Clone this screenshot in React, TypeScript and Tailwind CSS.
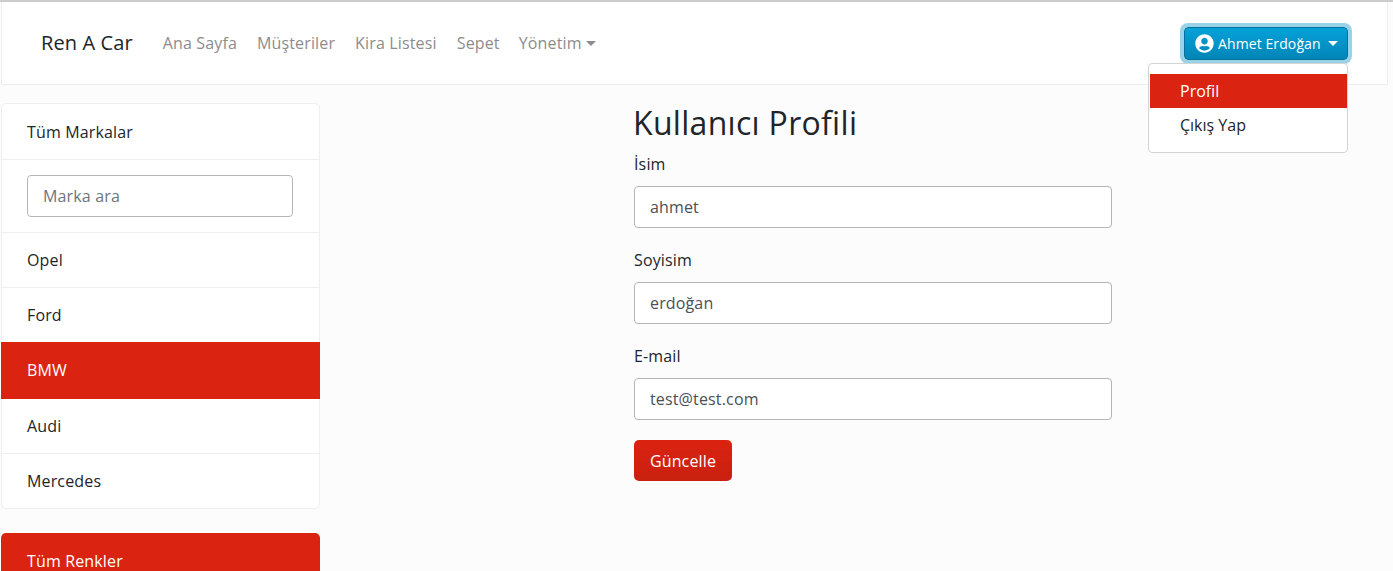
const brands = ["Opel", "Ford", "BMW", "Audi", "Mercedes"];

function UserIcon() {
  return (
    <svg viewBox="0 0 496 512" className="w-[19px] h-[19px] mr-[4px] shrink-0" fill="currentColor">
      <path d="M248 8C111 8 0 119 0 256s111 248 248 248 248-111 248-248S385 8 248 8zm0 96c48.600 0 88 39.400 88 88s-39.400 88-88 88-88-39.400-88-88 39.400-88 88-88zm0 344c-58.700 0-111.300-26.600-146.500-68.200 18.800-35.400 55.600-59.800 98.500-59.800 2.400 0 4.800.4 7.100 1.100 13 4.200 26.600 6.900 40.900 6.900 14.300 0 28-2.700 40.900-6.900 2.300-.7 4.700-1.100 7.100-1.100 42.900 0 79.700 24.400 98.500 59.800C359.300 421.400 306.700 448 248 448z" />
    </svg>
  );
}

function Caret() {
  return <span className="ml-[7px] inline-block border-x-[5px] border-t-[5px] border-x-transparent border-t-current" />;
}

function Navbar() {
  const links = ["Ana Sayfa", "Müşteriler", "Kira Listesi", "Sepet"];
  return (
    <nav className="relative ml-px mr-[5px] h-[83px] border border-t-0 border-[#eeeeee] bg-white flex items-center pl-[39px] pr-[39px]">
      <a className="text-[20px] text-[#212529] mr-[30px] tracking-[0.1px]">Ren A Car</a>
      <div className="flex items-center gap-[20px] text-[#8c8c8c]">
        {links.map((l) => (
          <a key={l}>{l}</a>
        ))}
        <a className="flex items-center -ml-px">
          Yönetim
          <span className="ml-[4px] inline-block border-x-[5px] border-t-[5px] border-x-transparent border-t-current" />
        </a>
      </div>
      <div className="relative ml-auto">
        <button className="flex items-center h-[33px] w-[164px] pl-[10px] rounded-[4px] border border-[#04729c] bg-gradient-to-b from-[#04a2d9] to-[#0285b7] text-[14px] tracking-[0.1px] text-white ring-4 ring-[#98d3e8]">
          <UserIcon />
          Ahmet Erdoğan
          <Caret />
        </button>
        <div className="absolute right-0 top-[36px] w-[200px] h-[90px] rounded-[4px] border border-[#d4d4d4] bg-white py-[10px] pl-px z-10 tracking-normal">
          <a className="block h-[34px] leading-[34px] pl-[30px] bg-[#da2310] text-white">Profil</a>
          <a className="block h-[34px] leading-[34px] pl-[30px] text-[#212529]">Çıkış Yap</a>
        </div>
      </div>
    </nav>
  );
}

function BrandList() {
  return (
    <div className="rounded-[5px] border border-[#efefef] bg-white text-[#212529]">
      <div className="h-[56px] flex items-center px-[25px] border-b border-[#efefef]">Tüm Markalar</div>
      <div className="h-[73px] flex items-center px-[25px] border-b border-[#efefef]">
        <input
          readOnly
          placeholder="Marka ara"
          className="w-[266px] h-[42px] rounded-[4px] border border-[#b5b5b5] bg-white px-[15px] outline-none placeholder:text-[#6c757d]"
        />
      </div>
      {brands.map((b, i) => {
        const active = b === "BMW";
        return (
          <div
            key={b}
            className={
              active
                ? "-mx-px h-[57px] flex items-center pb-[2px] px-[26px] bg-[#da2310] text-white"
                : i === brands.length - 1
                  ? "h-[54px] flex items-center px-[25px]"
                  : b === "Ford"
                    ? "h-[54px] flex items-center px-[25px]"
                    : "h-[55px] flex items-center px-[25px] border-b border-[#efefef]"
            }
          >
            {b}
          </div>
        );
      })}
    </div>
  );
}

function Field({ label, value }: { label: string; value: string }) {
  return (
    <div className="mb-[20px]">
      <label className="block h-[24px] leading-[24px] mb-[10px] text-[#212529]">{label}</label>
      <input
        readOnly
        value={value}
        className="block w-full h-[42px] rounded-[4px] border border-[#b5b5b5] bg-white px-[15px] text-[#495057] outline-none"
      />
    </div>
  );
}

export default function App() {
  return (
    <div className="h-[571px] overflow-hidden bg-[#fcfcfc] font-['Open_Sans',sans-serif] text-[16px] tracking-[0.15px] border-t-2 border-[#cccccc]">
      <Navbar />
      <div className="flex pt-[18px] pl-px">
        <aside className="w-[319px] shrink-0">
          <BrandList />
          <div className="mt-[24px] h-[60px] rounded-t-[5px] bg-[#da2310] px-[26px] pt-[16px] text-white">Tüm Renkler</div>
        </aside>
        <main className="ml-[314px] w-[478px]">
          <h1 className="text-[32px] leading-[38px] text-[#212529] h-[38px] mb-[11px] pt-px -ml-px tracking-[0.3px]">Kullanıcı Profili</h1>
          <Field label="İsim" value="ahmet" />
          <Field label="Soyisim" value="erdoğan" />
          <Field label="E-mail" value="test@test.com" />
          <button className="h-[41px] w-[98px] rounded-[5px] bg-gradient-to-b from-[#da2310] to-[#c9200f] text-white">Güncelle</button>
        </main>
      </div>
    </div>
  );
}
